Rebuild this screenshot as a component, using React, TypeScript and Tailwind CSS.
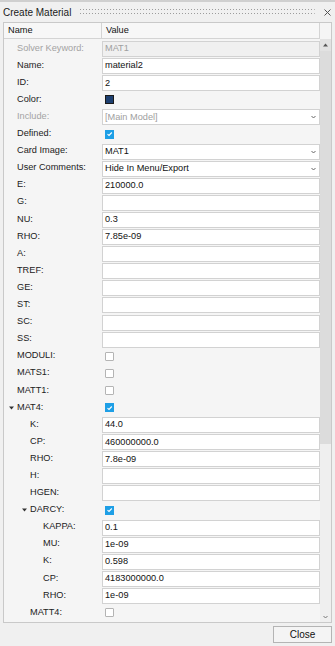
import React from 'react';

type Row = {
  label: string;
  level: number;
  kind: 'text' | 'check' | 'select' | 'color';
  value?: string;
  checked?: boolean;
  disabled?: boolean;
  expand?: boolean;
};

const rows: Row[] = [
  { label: 'Solver Keyword:', level: 0, kind: 'text', value: 'MAT1', disabled: true },
  { label: 'Name:', level: 0, kind: 'text', value: 'material2' },
  { label: 'ID:', level: 0, kind: 'text', value: '2' },
  { label: 'Color:', level: 0, kind: 'color' },
  { label: 'Include:', level: 0, kind: 'select', value: '[Main Model]', disabled: true },
  { label: 'Defined:', level: 0, kind: 'check', checked: true },
  { label: 'Card Image:', level: 0, kind: 'select', value: 'MAT1' },
  { label: 'User Comments:', level: 0, kind: 'select', value: 'Hide In Menu/Export' },
  { label: 'E:', level: 0, kind: 'text', value: '210000.0' },
  { label: 'G:', level: 0, kind: 'text', value: '' },
  { label: 'NU:', level: 0, kind: 'text', value: '0.3' },
  { label: 'RHO:', level: 0, kind: 'text', value: '7.85e-09' },
  { label: 'A:', level: 0, kind: 'text', value: '' },
  { label: 'TREF:', level: 0, kind: 'text', value: '' },
  { label: 'GE:', level: 0, kind: 'text', value: '' },
  { label: 'ST:', level: 0, kind: 'text', value: '' },
  { label: 'SC:', level: 0, kind: 'text', value: '' },
  { label: 'SS:', level: 0, kind: 'text', value: '' },
  { label: 'MODULI:', level: 0, kind: 'check' },
  { label: 'MATS1:', level: 0, kind: 'check' },
  { label: 'MATT1:', level: 0, kind: 'check' },
  { label: 'MAT4:', level: 0, kind: 'check', checked: true, expand: true },
  { label: 'K:', level: 1, kind: 'text', value: '44.0' },
  { label: 'CP:', level: 1, kind: 'text', value: '460000000.0' },
  { label: 'RHO:', level: 1, kind: 'text', value: '7.8e-09' },
  { label: 'H:', level: 1, kind: 'text', value: '' },
  { label: 'HGEN:', level: 1, kind: 'text', value: '' },
  { label: 'DARCY:', level: 1, kind: 'check', checked: true, expand: true },
  { label: 'KAPPA:', level: 2, kind: 'text', value: '0.1' },
  { label: 'MU:', level: 2, kind: 'text', value: '1e-09' },
  { label: 'K:', level: 2, kind: 'text', value: '0.598' },
  { label: 'CP:', level: 2, kind: 'text', value: '4183000000.0' },
  { label: 'RHO:', level: 2, kind: 'text', value: '1e-09' },
  { label: 'MATT4:', level: 1, kind: 'check' },
];

const indent = ['pl-[13px]', 'pl-[26px]', 'pl-[39px]'];
const caret = ['left-[5px]', 'left-[18px]', 'left-[31px]'];

function CheckBox({ checked }: { checked?: boolean }) {
  if (checked) {
    return (
      <div className="w-[9px] h-[9px] bg-[#1e9fe6] flex items-center justify-center">
        <svg width="7" height="6" viewBox="0 0 7 6">
          <polyline points="1.5,3.2 3,4.5 5.8,1.5" fill="none" stroke="white" strokeWidth="1.1" />
        </svg>
      </div>
    );
  }
  return <div className="w-[9px] h-[9px] bg-white border border-[#b4b4b4] rounded-[1px]" />;
}

function Chevron() {
  return (
    <svg width="5" height="4" viewBox="0 0 5 4" className="mr-[3px]">
      <polyline points="0.5,1 2.5,3 4.5,1" fill="none" stroke="#666" strokeWidth="1" />
    </svg>
  );
}

function Value({ row }: { row: Row }) {
  if (row.kind === 'check') {
    return (
      <div className="pl-[3px] h-full flex items-center">
        <CheckBox checked={row.checked} />
      </div>
    );
  }
  if (row.kind === 'color') {
    return (
      <div className="pl-[3px] h-full flex items-center">
        <div className="w-[9px] h-[9px] bg-[#1d3f70] border border-[#1a1a1a]" />
      </div>
    );
  }
  return (
    <div
      className={`mt-[1px] h-[16px] border border-[#d2d2d2] flex items-center justify-between pl-[2px] ${
        row.disabled && row.kind === 'text' ? 'bg-[#f0f0f0]' : 'bg-white'
      } ${row.disabled ? 'text-[#a0a0a0]' : 'text-[#111]'}`}
    >
      <span className="leading-none">{row.value}</span>
      {row.kind === 'select' && <Chevron />}
    </div>
  );
}

export default function App() {
  return (
    <div
      className="w-[335px] h-[646px] bg-[#f0f0f0] flex flex-col text-[9.2px] text-[#222] overflow-hidden"
      style={{ fontFamily: '"Liberation Sans", Arial, sans-serif' }}
    >
      {/* title bar */}
      <div className="h-[22px] shrink-0 border-t-2 border-[#cfcfcf] flex items-center pl-[3px] pr-[4px]">
        <span className="text-[10px] text-[#1a1a1a]">Create Material</span>
        <svg className="flex-1 mx-[9px]" height="6" aria-hidden="true">
          <defs>
            <pattern id="grip" width="3" height="4" patternUnits="userSpaceOnUse">
              <rect width="1" height="1" fill="#9c9c9c" />
            </pattern>
          </defs>
          <rect width="100%" height="6" fill="url(#grip)" />
        </svg>
        <svg width="7" height="7" viewBox="0 0 7 7">
          <path d="M0.5 0.5 L6.5 6.5 M6.5 0.5 L0.5 6.5" stroke="#555" strokeWidth="1" />
        </svg>
      </div>

      {/* property tree */}
      <div className="mx-[3px] h-[601px] shrink-0 border border-[#c9c9c9] bg-[#f5f5f5] flex">
        <div className="w-[319px] flex flex-col">
          <div className="h-[16px] shrink-0 flex border-b border-[#d4d4d4] border-r text-[#111] bg-[#f7f7f7]">
            <div className="w-[98px] border-r border-[#d4d4d4] pl-[4px] flex items-center">Name</div>
            <div className="flex-1 pl-[4px] flex items-center">Value</div>
          </div>
          <div className="pt-[1px]">
            {rows.map((row, i) => (
              <div key={i} className="h-[17.1px] flex">
                <div
                  className={`relative w-[98px] flex items-center ${indent[row.level]} ${
                    row.disabled ? 'text-[#a3a3a3]' : 'text-[#222]'
                  }`}
                >
                  {row.expand && (
                    <svg className={`absolute ${caret[row.level]}`} width="5" height="4" viewBox="0 0 5 4">
                      <polygon points="0,0.5 5,0.5 2.5,3.5" fill="#333" />
                    </svg>
                  )}
                  {row.label}
                </div>
                <div className="w-[218px]">
                  <Value row={row} />
                </div>
              </div>
            ))}
          </div>
        </div>

        {/* scrollbar */}
        <div className="w-[11px] mt-[16px] mb-[0px] bg-[#efefef] flex flex-col items-center">
          <div className="h-[12px] w-full flex items-center justify-center bg-[#e2e2e2]">
            <svg width="5" height="4" viewBox="0 0 5 4">
              <polygon points="0,3.5 5,3.5 2.5,0.5" fill="#555" />
            </svg>
          </div>
          <div className="w-full h-[393px] bg-[#dcdcdc]" />
          <div className="flex-1" />
          <div className="h-[11px] w-full flex items-center justify-center">
            <svg width="5" height="4" viewBox="0 0 5 4">
              <polyline points="0.5,1 2.5,3 4.5,1" fill="none" stroke="#777" strokeWidth="1" />
            </svg>
          </div>
        </div>
      </div>

      {/* footer */}
      <div className="flex-1 flex justify-end items-start pt-[3px] pr-[3px]">
        <button className="w-[59px] h-[17px] border border-[#b4b4b4] bg-[#f4f4f4] text-[10px] text-[#111] leading-none">
          Close
        </button>
      </div>
    </div>
  );
}
